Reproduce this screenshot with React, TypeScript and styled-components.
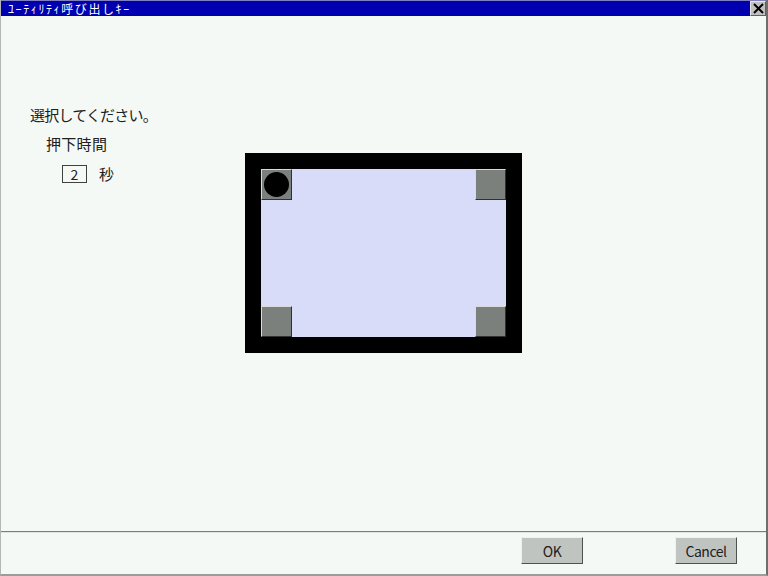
import styled, { createGlobalStyle } from 'styled-components';

const Global = createGlobalStyle`
    html, body {
        margin: 0;
        padding: 0;
        background: #f5f9f5;
    }
    * {
        box-sizing: border-box;
    }
`

const font = `"Noto Sans CJK JP", "DejaVu Sans", sans-serif`;

function App() {
  return (
    <Window>
        <Global />
        <TitleBar>
            <Title>ﾕｰﾃｨﾘﾃｨ呼び出しｷｰ</Title>
            <CloseButton aria-label="close">
                <svg width="11" height="11" viewBox="0 0 11 11">
                    <path d="M1 1 L10 10 M10 1 L1 10" stroke="#000" strokeWidth="2" />
                </svg>
            </CloseButton>
        </TitleBar>

        <Content>
            <Settings>
                <Prompt>選択してください。</Prompt>
                <Label>押下時間</Label>
                <ValueRow>
                    <ValueBox>2</ValueBox>
                    <Unit>秒</Unit>
                </ValueRow>
            </Settings>

            <Screen>
                <ScreenInner>
                    <Corner $row={1} $col={1}><Dot /></Corner>
                    <Corner $row={1} $col={3} />
                    <Corner $row={3} $col={1} />
                    <Corner $row={3} $col={3} />
                </ScreenInner>
            </Screen>
        </Content>

        <Footer>
            <Button>OK</Button>
            <Button>Cancel</Button>
        </Footer>
    </Window>
  )
}

export default App

const Window = styled.div`
    display: flex;
    flex-direction: column;
    width: 768px;
    height: 576px;
    background: #f5f9f5;
    border-left: 1px solid #b4b8b4;
    border-right: 2px solid #6c706c;
    border-bottom: 2px solid #9a9e9a;
    font-family: ${font};
`

const TitleBar = styled.div`
    display: flex;
    align-items: flex-start;
    justify-content: space-between;
    height: 16px;
    background: #0000b0;
    box-shadow: inset 0 1px 0 #8080c0;
    padding: 0 0 0 7px;
`

const Title = styled.span`
    color: #fff;
    font-size: 12px;
    line-height: 18px;
    letter-spacing: 1.6px;
    white-space: nowrap;
`

const CloseButton = styled.button`
    align-self: center;
    display: flex;
    align-items: center;
    justify-content: center;
    width: 16px;
    height: 15px;
    padding: 0;
    background: #c0c0c0;
    border: 1px solid;
    border-color: #e8e8e8 #606060 #606060 #e8e8e8;
`

const Content = styled.div`
    flex: 1;
    display: flex;
`

const Settings = styled.div`
    width: 244px;
    padding: 90px 0 0 29px;
    color: #202020;
`

const Prompt = styled.div`
    font-size: 15px;
    line-height: 18px;
    letter-spacing: -0.8px;
`

const Label = styled.div`
    margin: 11px 0 0 16px;
    font-size: 15px;
    line-height: 18px;
    letter-spacing: 0.3px;
`

const ValueRow = styled.div`
    display: flex;
    align-items: center;
    gap: 12px;
    margin: 12px 0 0 32px;
`

const ValueBox = styled.div`
    width: 25px;
    height: 18px;
    border: 1px solid #404040;
    font-size: 14px;
    line-height: 16px;
    text-align: center;
`

const Unit = styled.span`
    font-size: 15px;
    line-height: 18px;
`

const Screen = styled.div`
    align-self: flex-start;
    margin-top: 137px;
    width: 277px;
    height: 200px;
    padding: 16px;
    background: #000;
`

const ScreenInner = styled.div`
    display: grid;
    grid-template-columns: 31px 1fr 31px;
    grid-template-rows: 31px 1fr 31px;
    width: 100%;
    height: 100%;
    background: #d8dcf8;
`

const Corner = styled.div<{ $row: number; $col: number }>`
    grid-row: ${p => p.$row};
    grid-column: ${p => p.$col};
    display: flex;
    align-items: center;
    justify-content: center;
    background: #7c807c;
    border: 1px solid;
    border-color: #d8dcd8 #303030 #303030 #d8dcd8;
`

const Dot = styled.div`
    width: 25px;
    height: 25px;
    border-radius: 50%;
    background: #000;
`

const Footer = styled.div`
    display: flex;
    justify-content: flex-end;
    gap: 92px;
    height: 43px;
    padding: 5px 29px 0 0;
    border-top: 1px solid #7c807c;
    box-shadow: inset 0 1px 0 #e0e4e0;
`

const Button = styled.button`
    width: 62px;
    height: 27px;
    padding: 0;
    background: #c0c4c0;
    border: 1px solid;
    border-color: #f0f0f0 #505050 #505050 #f0f0f0;
    color: #202020;
    font-family: ${font};
    font-size: 14px;
    letter-spacing: -0.5px;
`
